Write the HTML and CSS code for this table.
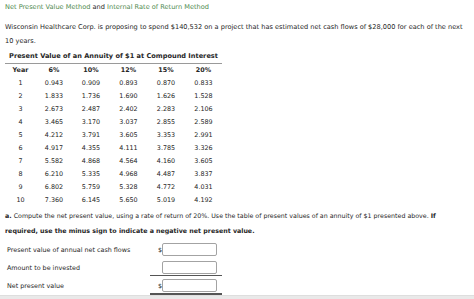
FILE: index.html
```html
<!DOCTYPE html>
<html>
<head>
<meta charset="utf-8">
<link rel="stylesheet" href="styles.css">
</head>
<body>
<div class="page">
  <div class="crumbs"><span class="link">Net Present Value Method</span> and <span class="link">Internal Rate of Return Method</span></div>
  <div class="intro">
    <div class="line">Wisconsin Healthcare Corp. is proposing to spend $140,532 on a project that has estimated net cash flows of $28,000 for each of the next</div>
    <div class="line">10 years.</div>
  </div>
  <div class="pv-table">
    <div class="pv-title">Present Value of an Annuity of $1 at Compound Interest</div>
    <div class="pv-grid pv-head">
      <span>Year</span><span>6%</span><span>10%</span><span>12%</span><span>15%</span><span>20%</span>
    </div>
    <div class="pv-grid"><span>1</span><span>0.943</span><span>0.909</span><span>0.893</span><span>0.870</span><span>0.833</span></div>
    <div class="pv-grid"><span>2</span><span>1.833</span><span>1.736</span><span>1.690</span><span>1.626</span><span>1.528</span></div>
    <div class="pv-grid"><span>3</span><span>2.673</span><span>2.487</span><span>2.402</span><span>2.283</span><span>2.106</span></div>
    <div class="pv-grid"><span>4</span><span>3.465</span><span>3.170</span><span>3.037</span><span>2.855</span><span>2.589</span></div>
    <div class="pv-grid"><span>5</span><span>4.212</span><span>3.791</span><span>3.605</span><span>3.353</span><span>2.991</span></div>
    <div class="pv-grid"><span>6</span><span>4.917</span><span>4.355</span><span>4.111</span><span>3.785</span><span>3.326</span></div>
    <div class="pv-grid"><span>7</span><span>5.582</span><span>4.868</span><span>4.564</span><span>4.160</span><span>3.605</span></div>
    <div class="pv-grid"><span>8</span><span>6.210</span><span>5.335</span><span>4.968</span><span>4.487</span><span>3.837</span></div>
    <div class="pv-grid"><span>9</span><span>6.802</span><span>5.759</span><span>5.328</span><span>4.772</span><span>4.031</span></div>
    <div class="pv-grid"><span>10</span><span>7.360</span><span>6.145</span><span>5.650</span><span>5.019</span><span>4.192</span></div>
  </div>
  <div class="question">
    <div class="line"><b>a.</b> <span>Compute the net present value, using a rate of return of 20%. Use the table of present values of an annuity of $1 presented above.</span> <b>If</b></div>
    <div class="line"><b>required, use the minus sign to indicate a negative net present value.</b></div>
  </div>
  <div class="answers">
    <div class="ans-row">
      <div class="ans-label">Present value of annual net cash flows</div>
      <div class="ans-value"><span class="cur">$</span><input class="ans-box" type="text"></div>
    </div>
    <div class="ans-row">
      <div class="ans-label">Amount to be invested</div>
      <div class="ans-value single"><span class="cur"></span><input class="ans-box" type="text"></div>
    </div>
    <div class="ans-row">
      <div class="ans-label">Net present value</div>
      <div class="ans-value double"><span class="cur">$</span><input class="ans-box" type="text"></div>
    </div>
  </div>
</div>
<div class="footer-bar"></div>
</body>
</html>
```
FILE: styles.css
```css
html, body {
  margin: 0;
  padding: 0;
  background: #fff;
}
body {
  font-family: "DejaVu Sans", Verdana, sans-serif;
  font-size: 6.6px;
  color: #262626;
  overflow: hidden;
}
.page {
  padding-left: 5px;
  width: 466px;
}
.line {
  white-space: nowrap;
}
.crumbs {
  line-height: 14px;
  height: 14px;
}
.link {
  color: #4f8a4f;
}
.intro {
  margin-top: 6px;
  line-height: 14px;
}
.pv-table {
  width: 217px;
  margin-top: 1px;
}
.pv-title {
  font-weight: bold;
  text-align: center;
  line-height: 14px;
  border-bottom: 1px solid #9a9a9a;
}
.pv-grid {
  display: grid;
  grid-template-columns: 31px 36px 38px 37px 38px 37px;
  height: 13px;
  line-height: 13px;
  text-align: center;
  font-size: 6.4px;
}
.pv-head {
  font-weight: bold;
}
.question {
  margin-top: 1px;
  line-height: 15px;
  font-size: 6.3px;
}
.answers {
  margin-top: 3px;
  width: 217px;
}
.ans-row {
  display: grid;
  grid-template-columns: 145px 72px;
  align-items: center;
}
.ans-label {
  padding-left: 2px;
  font-size: 6.4px;
}
.ans-value {
  display: flex;
  align-items: center;
  padding: 2px 5px 3px 8px;
  font-size: 6.4px;
}
.ans-value.single {
  padding-bottom: 1px;
  border-bottom: 1px solid #555;
  margin-bottom: 1px;
}
.ans-value.double {
  padding-bottom: 1px;
  border-bottom: 2px solid #555;
}
.cur {
  width: 4px;
  display: inline-block;
}
.ans-box {
  box-sizing: border-box;
  width: 55px;
  height: 13px;
  margin: 0;
  padding: 0;
  border: 1px solid #a3a3a3;
  border-radius: 2px;
  background: #fff;
}
.footer-bar {
  height: 10px;
  background: #e9e9e9;
  border-top: 1px solid #dedede;
}
```
